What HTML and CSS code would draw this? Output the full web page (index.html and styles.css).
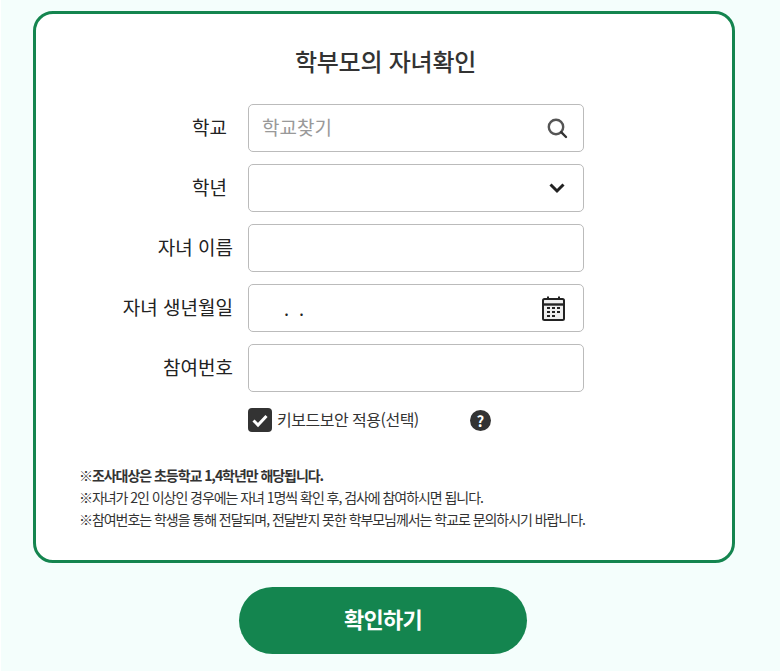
FILE: index.html
```html
<!DOCTYPE html>
<html lang="ko">
<head>
    <meta charset="UTF-8">
    <meta name="viewport" content="width=device-width, initial-scale=1.0">
    <title>학부모의 자녀확인</title>

    <link rel="stylesheet" href="styles.css">
</head>
<body>
    <div class="page">
        <form class="card">
            <h1 class="card-title">학부모의 자녀확인</h1>

            <div class="form-row">
                <label class="form-label form-label-short">학교</label>
                <div class="field">
                    <span class="placeholder">학교찾기</span>
                    <svg class="field-icon" width="22" height="22" viewBox="0 0 22 22" fill="none">
                        <circle cx="10" cy="10" r="7.2" stroke="#555" stroke-width="2.4"/>
                        <path d="M15.2 15.2L20 20" stroke="#333" stroke-width="2.4" stroke-linecap="round"/>
                    </svg>
                </div>
            </div>

            <div class="form-row">
                <label class="form-label form-label-short">학년</label>
                <div class="field">
                    <svg class="field-icon" width="22" height="22" viewBox="0 0 22 22" fill="none">
                        <path d="M4.5 7.5L11 14L17.5 7.5" stroke="#222" stroke-width="3"/>
                    </svg>
                </div>
            </div>

            <div class="form-row">
                <label class="form-label">자녀 이름</label>
                <div class="field"></div>
            </div>

            <div class="form-row">
                <label class="form-label">자녀 생년월일</label>
                <div class="field">
                    <span class="date-value">. .</span>
                    <svg class="field-icon icon-calendar" width="24" height="26" viewBox="0 0 24 26" fill="none">
                        <rect x="2" y="4" width="21" height="21" rx="1.5" fill="#eee" stroke="#222" stroke-width="2"/>
                        <path d="M2 9.5H23" stroke="#222" stroke-width="2.4"/>
                        <path d="M7 1.5V5M18 1.5V5" stroke="#222" stroke-width="2"/>
                        <path d="M6 13H9M11 13H14M16 13H19M6 17H9M11 17H14M16 17H19M6 21H9M11 21H14" stroke="#222" stroke-width="2"/>
                    </svg>
                </div>
            </div>

            <div class="form-row">
                <label class="form-label">참여번호</label>
                <div class="field"></div>
            </div>

            <div class="security-row">
                <span class="check-box">
                    <svg width="24" height="24" viewBox="0 0 24 24" fill="none">
                        <path d="M5.5 12.5L10 17L18.5 8" stroke="#fff" stroke-width="3"/>
                    </svg>
                </span>
                <span class="security-text">키보드보안 적용(선택)</span>
                <span class="help-icon">?</span>
            </div>

            <div class="notes">
                <p class="note note-strong">※조사대상은 초등학교 1,4학년만 해당됩니다.</p>
                <p class="note">※자녀가 2인 이상인 경우에는 자녀 1명씩 확인 후, 검사에 참여하시면 됩니다.</p>
                <p class="note">※참여번호는 학생을 통해 전달되며, 전달받지 못한 학부모님께서는 학교로 문의하시기 바랍니다.</p>
            </div>
        </form>

        <button class="btn-confirm" type="button">확인하기</button>
    </div>
</body>
</html>
```

FILE: styles.css
```css
html, body{
    margin: 0;
    padding: 0;
    background-color: #fff;
}

body{
    font-family: "Noto Sans CJK KR", "Noto Sans", sans-serif;
    color: #222;
}

.page{
    height: 671px;
    margin-left: 1px;
    padding-top: 11px;
    box-sizing: border-box;
    background-color: #f4fefc;
    overflow: hidden;
}

.card{
    width: 702px;
    height: 552px;
    margin-left: 32px;
    padding: 29px 0 0;
    box-sizing: border-box;
    background-color: #fff;
    border: 3px solid #14854f;
    border-radius: 20px;
}

.card-title{
    margin: 0 0 25px;
    height: 36px;
    padding-left: 3px;
    font-size: 24px;
    line-height: 36px;
    font-weight: 500;
    letter-spacing: -0.25px;
    text-align: center;
    color: #333;
}

.form-row{
    display: flex;
    align-items: center;
    margin-bottom: 12px;
}

.form-label{
    width: 212px;
    padding: 0 15px 3px 0;
    box-sizing: border-box;
    font-size: 19px;
    text-align: right;
}

.form-label-short{
    padding-right: 21px;
}

.field{
    width: 336px;
    height: 48px;
    padding: 0 15px 0 13px;
    box-sizing: border-box;
    display: flex;
    align-items: center;
    background-color: #fff;
    border: 1px solid #bbb;
    border-radius: 5px;
}

.placeholder{
    padding-bottom: 3px;
    font-size: 19px;
    color: #999;
}

.date-value{
    margin-left: 22px;
    font-size: 18px;
    word-spacing: 5px;
}

.field-icon{
    margin-left: auto;
}

.icon-calendar{
    margin-right: 3px;
}

.security-row{
    display: flex;
    align-items: center;
    height: 26px;
    margin-top: 15px;
    margin-left: 212px;
}

.check-box{
    width: 24px;
    height: 24px;
    display: flex;
    background-color: #333;
    border-radius: 4px;
}

.security-text{
    margin-left: 5px;
    padding-bottom: 2px;
    font-size: 16px;
    letter-spacing: -0.5px;
    color: #333;
}

.help-icon{
    width: 21px;
    height: 21px;
    margin-left: 51px;
    background-color: #333;
    border-radius: 50%;
    color: #fff;
    font-size: 15px;
    font-weight: 700;
    line-height: 21px;
    text-align: center;
}

.notes{
    margin-top: 31px;
    margin-left: 43px;
}

.note{
    margin: 0;
    height: 22px;
    font-size: 14px;
    line-height: 22px;
    letter-spacing: -1.05px;
    white-space: nowrap;
    color: #333;
}

.note-strong{
    font-weight: 700;
}

.btn-confirm{
    display: block;
    width: 288px;
    height: 67px;
    margin: 24px 0 0 238px;
    padding: 0 0 5px;
    background-color: #14854f;
    border: 0;
    border-radius: 34px;
    color: #fff;
    font-family: inherit;
    font-size: 22px;
    font-weight: 700;
    letter-spacing: -0.8px;
    cursor: pointer;
}
```
